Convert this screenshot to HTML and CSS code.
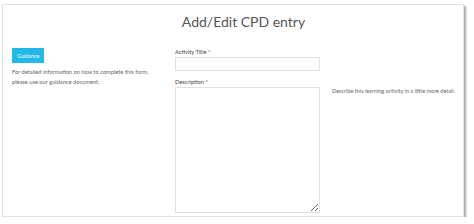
FILE: index.html
```html
<!DOCTYPE html>
<html lang="en">
<head>
    <meta charset="UTF-8">
    <title>Add/Edit CPD entry</title>
    <link rel="stylesheet" href="styles.css">
</head>
<body>
    <div class="card">
        <h1>Add/Edit CPD entry</h1>

        <div class="form-layout">
            <!-- Coluna de ajuda -->
            <div class="side">
                <button class="guidance-btn">Guidance</button>
                <p class="side-text">For detailed information on how to complete this form,<br>please use our guidance document.</p>
            </div>

            <div class="fields">
                <div class="field">
                    <label for="activityTitle">Activity Title *</label>
                    <input type="text" id="activityTitle">
                </div>
                <div class="field field-desc">
                    <label for="description">Description *</label>
                    <div class="desc-row">
                        <textarea id="description"></textarea>
                        <span class="help">Describe this learning activity in a little more detail.</span>
                    </div>
                </div>
            </div>
        </div>
    </div>
</body>
</html>
```

FILE: styles.css
```css
body {
    margin: 0;
    padding: 0;
    background-color: #ffffff;
    font-family: Lato, "Open Sans", Arial, sans-serif;
    color: #555;
}
.card {
    margin: 4px 0 0 2px;
    width: 462px;
    height: 213px;
    border: 1px solid #e2e2e2;
    box-shadow: 2px 2px 2px #a8a8a8;
    background-color: #fff;
    box-sizing: border-box;
}
h1 {
    margin: 0;
    padding: 7px 0 0 21px;
    font-size: 14px;
    line-height: 19px;
    font-weight: normal;
    text-align: center;
    color: #555;
}
.form-layout {
    display: flex;
    padding: 17px 0 0 9px;
}
.side {
    width: 163px;
}
.guidance-btn {
    display: block;
    margin: 0;
    padding: 0 5px;
    height: 15px;
    border: none;
    background-color: #21b7e9;
    color: #fff;
    font-family: Lato, "Open Sans", Arial, sans-serif;
    font-size: 5.4px;
}
.side-text {
    margin: 4px 0 0 0;
    font-size: 5.7px;
    line-height: 10px;
    color: #666;
}
.field label {
    display: block;
    font-size: 5.7px;
    line-height: 8px;
    color: #444;
    margin-bottom: 1px;
}
.field input {
    display: block;
    width: 145px;
    height: 14px;
    margin: 0;
    box-sizing: border-box;
    border: 1px solid #e0e0e0;
}
.field-desc {
    margin-top: 7px;
}
.desc-row {
    display: flex;
    align-items: flex-start;
}
.desc-row textarea {
    display: block;
    width: 145px;
    height: 126px;
    margin: 0;
    box-sizing: border-box;
    border: 1px solid #e0e0e0;
    resize: both;
}
.help {
    margin-left: 12px;
    margin-top: 0;
    font-size: 5.5px;
    line-height: 8px;
    color: #666;
    white-space: nowrap;
}
```
